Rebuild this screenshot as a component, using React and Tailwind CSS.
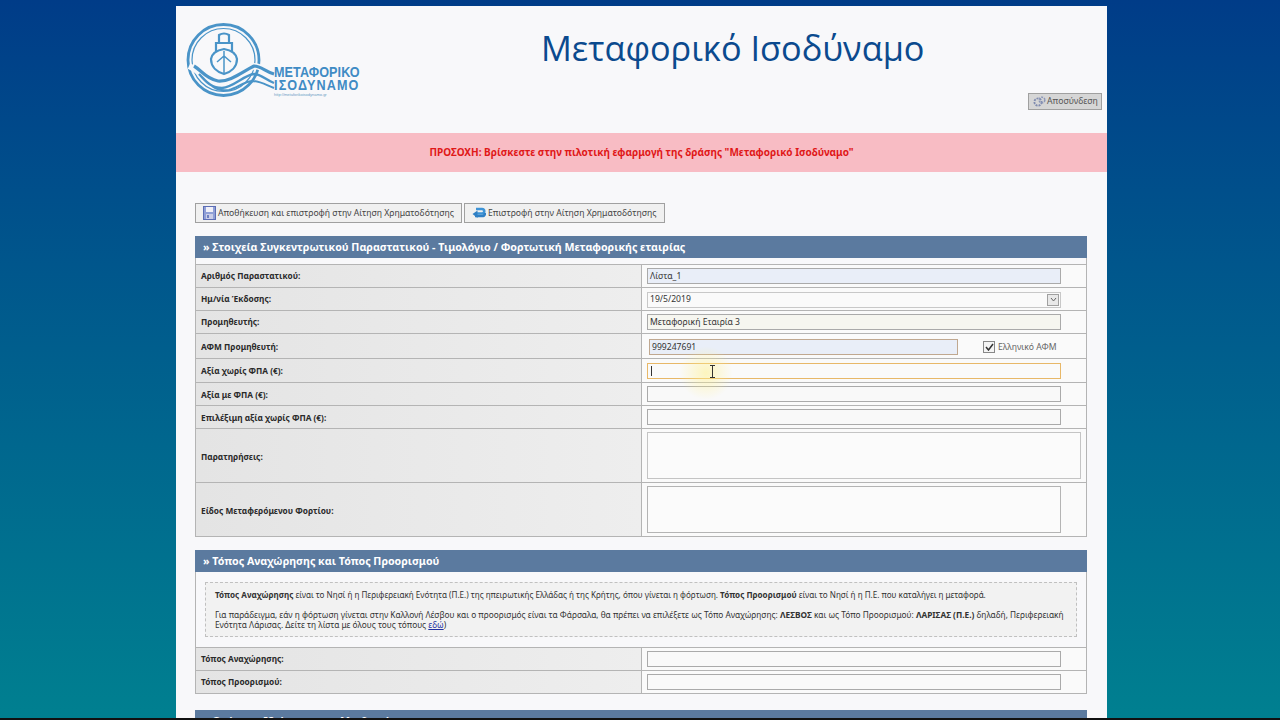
const font = { fontFamily: '"Noto Sans", sans-serif' }

function Logo() {
  return (
    <div className="flex items-start">
      <svg width="90" height="82" viewBox="0 0 90 82" className="shrink-0">
        <circle cx="37.5" cy="40" r="35.5" fill="none" stroke="#4a94c8" strokeWidth="2.8" />
        <circle cx="37.5" cy="40" r="31.5" fill="none" stroke="#4a94c8" strokeWidth="1.2" />
        <path d="M33 23 L33 15 Q38 12 43 15 L43 23" fill="#f8f8fa" stroke="#4a94c8" strokeWidth="2.2" />
        <path d="M30 32 L30 23 L46 23 L46 32" fill="#f8f8fa" stroke="#4a94c8" strokeWidth="2.2" />
        <path d="M38 29 C32 30 26 33 25 39 C25 47 31 52 38 54 C45 52 51 47 51 39 C50 33 44 30 38 29 Z" fill="#f8f8fa" stroke="#4a94c8" strokeWidth="2.2" />
        <path d="M38 31 L38 53 M31 42 L38 36 L45 42" fill="none" stroke="#4a94c8" strokeWidth="1.5" />
        <path d="M3 46 C12 50 18 59 30 61 C42 63 55 54 68 46 C75 46 80 52 88 54" fill="none" stroke="#f8f8fa" strokeWidth="6" />
        <path d="M8 46 C15 50 20 59 32 61 C44 62 56 52 68 46 C75 46 80 52 88 54" fill="none" stroke="#4a94c8" strokeWidth="3.2" />
        <path d="M13 54 C19 60 24 68 36 68 C48 67 58 55 68 54 C75 54 80 60 88 63" fill="none" stroke="#4a94c8" strokeWidth="2.4" />
        <path d="M26 66 C31 70 36 71 43 70 C51 68 57 62 66 61 C74 61 80 65 88 68" fill="none" stroke="#4a94c8" strokeWidth="2" />
      </svg>
      <div className="-ml-[2px] mt-[46px] flex flex-col font-bold text-[#3f8bc4] whitespace-nowrap" style={{ fontFamily: '"Liberation Sans", sans-serif' }}>
        <span className="text-[14px] leading-[13px] h-[13px] tracking-[0.1px] scale-x-90 origin-left">ΜΕΤΑΦΟΡΙΚΟ</span>
        <span className="text-[14px] leading-[13px] h-[13px] tracking-[1.25px] scale-x-90 origin-left">ΙΣΟΔΥΝΑΜΟ</span>
        <span className="text-[4px] leading-[5px] text-[#6a9cc4] font-normal">http://metaforikoisodynamo.gr</span>
      </div>
    </div>
  )
}

function SaveIcon() {
  return (
    <svg width="13" height="14" viewBox="0 0 13 14" className="shrink-0">
      <rect x="0.5" y="0.5" width="12" height="13" fill="#8f9fd6" stroke="#5c6db5" />
      <rect x="3" y="1" width="7" height="5" fill="#f0f0f8" />
      <rect x="3" y="8" width="7" height="5" fill="#c9cde8" />
      <rect x="4" y="9" width="2" height="3" fill="#6f7fbf" />
    </svg>
  )
}

function BackIcon() {
  return (
    <svg width="14" height="12" viewBox="0 0 14 12" className="shrink-0">
      <path d="M4 2 H10 C13 2 13 6.5 10 6.5 H5" fill="none" stroke="#3d93d6" strokeWidth="2.6" />
      <path d="M5.5 3.5 L0.5 7 L5.5 11 Z" fill="#2f7fc4" />
      <path d="M3 9 H10 C12 9 13 8 13 6" fill="none" stroke="#2f7fc4" strokeWidth="2.4" />
    </svg>
  )
}

function LogoutIcon() {
  return (
    <svg width="13" height="13" viewBox="0 0 13 13" className="shrink-0">
      <circle cx="5" cy="7" r="3.6" fill="none" stroke="#7f8bb0" strokeWidth="1.8" strokeDasharray="2 1" />
      <circle cx="9" cy="5" r="2.8" fill="none" stroke="#8d97b8" strokeWidth="1.6" strokeDasharray="2 1" />
    </svg>
  )
}

function Field({ value, w = "w-[414px]", bg = "bg-[#f9f9f9]", border = "border-[#aaaaaa]" }) {
  return (
    <div className={`${w} h-[16px] border ${border} ${bg} pl-[2px] flex items-center text-[8.6px] text-[#333] leading-none`}>
      {value}
    </div>
  )
}

function Row({ label, h = "h-[23px]", pad = "", labelPad = "", children }) {
  return (
    <div className={`flex ${h} border-t border-[#b4b4b4]`}>
      <div className={`w-[446px] shrink-0 bg-gradient-to-r from-[#e4e4e4] to-[#eeeeee] border-r border-[#b4b4b4] pl-[5px] flex items-center text-[8.3px] font-bold text-[#2a2a2a] ${pad} ${labelPad}`}>
        {label}
      </div>
      <div className={`flex-1 pl-[5px] flex items-center bg-[#fafafa] ${pad}`}>{children}</div>
    </div>
  )
}

function SectionHead({ children }) {
  return (
    <div className="h-[22px] bg-[#5b7a9f] pl-[8px] flex items-center text-[10.65px] font-bold text-white leading-none whitespace-nowrap">
      » {children}
    </div>
  )
}

export default function App() {
  return (
    <div style={font} className="h-[720px] overflow-hidden bg-gradient-to-b from-[#003c88] to-[#008090] relative pt-[6px]">
      <div className="ml-[176px] w-[931px] h-[712px] relative bg-[#f8f8fa] overflow-hidden">
        <div className="h-[127px] flex">
          <div className="w-[200px] pl-[10px] pt-[14px] shrink-0">
            <Logo />
          </div>
          <div className="flex-1 flex flex-col">
            <div className="pt-[20px] pl-[165px] text-[34.3px] leading-[44px] text-[#0b4a8e] whitespace-nowrap" style={{ fontFamily: '"Open Sans", sans-serif' }}>
              Μεταφορικό Ισοδύναμο
            </div>
            <div className="self-end mr-[5px] mt-[23px] h-[17px] w-[74px] bg-[#d6d6d6] border border-[#a0a0a0] flex items-center pl-[4px] gap-[1px] text-[8.7px] text-[#555] whitespace-nowrap">
              <LogoutIcon />
              Αποσύνδεση
            </div>
          </div>
        </div>

        <div className="h-[39px] bg-[#f8bcc4] flex items-center justify-center text-[10px] font-bold text-[#e01818]">
          ΠΡΟΣΟΧΗ: Βρίσκεστε στην πιλοτική εφαρμογή της δράσης "Μεταφορικό Ισοδύναμο"
        </div>

        <div className="px-[19px] pt-[31px]">
          <div className="flex gap-[2px] h-[20px]">
            <div className="w-[267px] border border-[#a0a0a0] bg-[#f0f0f0] flex items-center pl-[7px] gap-[2px] text-[8.65px] text-[#444] whitespace-nowrap">
              <SaveIcon />
              Αποθήκευση και επιστροφή στην Αίτηση Χρηματοδότησης
            </div>
            <div className="w-[201px] border border-[#a0a0a0] bg-[#f0f0f0] flex items-center pl-[7px] gap-[2px] text-[8.65px] text-[#444] whitespace-nowrap">
              <BackIcon />
              Επιστροφή στην Αίτηση Χρηματοδότησης
            </div>
          </div>

          <div className="mt-[13px] w-[892px]">
            <SectionHead>Στοιχεία Συγκεντρωτικού Παραστατικού - Τιμολόγιο / Φορτωτική Μεταφορικής εταιρίας</SectionHead>
            <div className="pt-[6px] border-x border-b border-[#b4b4b4]">
              <Row label="Αριθμός Παραστατικού:">
                <Field value="Λίστα_1" bg="bg-[#e9eef8]" />
              </Row>
              <Row label="Ημ/νία Έκδοσης:" pad="pt-px">
                <div className="w-[414px] h-[16px] flex items-center justify-between text-[8.6px] text-[#333] border border-[#c8c8c8] pl-[2px]">
                  19/5/2019
                  <span className="w-[12px] h-[12px] border border-[#a0a0a0] bg-[#e8e8e8] mr-px flex items-center justify-center">
                    <svg width="7" height="5" viewBox="0 0 7 5"><path d="M1 1 L3.5 4 L6 1" fill="none" stroke="#666" /></svg>
                  </span>
                </div>
              </Row>
              <Row label="Προμηθευτής:">
                <Field value="Μεταφορική Εταιρία 3" bg="bg-[#f6f6f0]" />
              </Row>
              <Row label="ΑΦΜ Προμηθευτή:" h="h-[25px]" pad="pt-[2px]">
                <div className="flex items-center pl-[2px]">
                  <Field value="999247691" w="w-[309px]" bg="bg-[#e9eef8]" border="border-[#c0a890]" />
                  <div className="ml-[25px] w-[12px] h-[12px] bg-[#f4f4f4] border border-[#888] flex items-center justify-center">
                    <svg width="9" height="8" viewBox="0 0 9 8"><path d="M1 4 L3.5 7 L8 1" fill="none" stroke="#333" strokeWidth="1.5" /></svg>
                  </div>
                  <span className="ml-[3px] text-[8.6px] text-[#666] whitespace-nowrap">Ελληνικό ΑΦΜ</span>
                </div>
              </Row>
              <Row label="Αξία χωρίς ΦΠΑ (€):" h="h-[24px]" labelPad="pt-[2px]">
                <div className="w-[414px] h-[16px] border border-[#e8b868] bg-[#fafafa] pl-[3px] flex items-center">
                  <span className="w-px h-[10px] bg-[#333]" />
                </div>
              </Row>
              <Row label="Αξία με ΦΠΑ (€):" labelPad="pt-[2px]">
                <Field />
              </Row>
              <Row label="Επιλέξιμη αξία χωρίς ΦΠΑ (€):" labelPad="pt-[2px]">
                <Field />
              </Row>
              <Row label="Παρατηρήσεις:" h="h-[54px]" labelPad="pt-[3px]">
                <div className="w-[434px] h-[47px] border border-[#c4c4c4] bg-[#fbfbfb]" />
              </Row>
              <Row label="Είδος Μεταφερόμενου Φορτίου:" h="h-[54px]" labelPad="pt-[3px]">
                <div className="w-[414px] h-[47px] border border-[#b4b4b4] bg-[#fbfbfb]" />
              </Row>
            </div>
          </div>

          <div className="mt-[13px] w-[892px]">
            <SectionHead>Τόπος Αναχώρησης και Τόπος Προορισμού</SectionHead>
            <div className="border-x border-b border-[#b4b4b4]">
              <div className="h-[75px] pt-[10px] px-[9px]">
                <div className="h-[55px] border border-dashed border-[#c0c0c0] bg-[#f2f2f2] px-[9px] pt-[7px] leading-[10px] text-[#333] whitespace-nowrap">
                  <p className="text-[8.1px]"><b>Τόπος Αναχώρησης</b> είναι το Νησί ή η Περιφερειακή Ενότητα (Π.Ε.) της ηπειρωτικής Ελλάδας ή της Κρήτης, όπου γίνεται η φόρτωση. <b>Τόπος Προορισμού</b> είναι το Νησί ή η Π.Ε. που καταλήγει η μεταφορά.</p>
                  <p className="mt-[10px] text-[8.3px]">Για παράδειγμα, εάν η φόρτωση γίνεται στην Καλλονή Λέσβου και ο προορισμός είναι τα Φάρσαλα, θα πρέπει να επιλέξετε ως Τόπο Αναχώρησης: <b>ΛΕΣΒΟΣ</b> και ως Τόπο Προορισμού: <b>ΛΑΡΙΣΑΣ (Π.Ε.)</b> δηλαδή, Περιφερειακή</p>
                  <p className="text-[8.3px]">Ενότητα Λάρισας. Δείτε τη λίστα με όλους τους τόπους <span className="underline text-[#2030a0]">εδώ</span>)</p>
                </div>
              </div>
              <Row label="Τόπος Αναχώρησης:" labelPad="pt-px"><Field /></Row>
              <Row label="Τόπος Προορισμού:" labelPad="pt-px"><Field /></Row>
            </div>
          </div>

          <div className="mt-[16px] w-[892px]">
            <SectionHead>Οχήματα Ιδιόκτητα και Μισθωμένα</SectionHead>
          </div>
        </div>

        {/* cursor highlight from the screen recording */}
        <div className="absolute left-[503px] top-[340px] w-[54px] h-[54px] rounded-full bg-[radial-gradient(circle,rgba(255,240,140,0.55),rgba(255,240,140,0)_70%)]" />
        <svg width="7" height="13" viewBox="0 0 7 13" className="absolute left-[533px] top-[359px]">
          <path d="M1 0.5 H6 M3.5 0.5 V12.5 M1 12.5 H6" fill="none" stroke="#333" />
        </svg>
      </div>
      <div className="absolute left-0 right-0 bottom-0 h-[2px] bg-[#111]" />
    </div>
  )
}
